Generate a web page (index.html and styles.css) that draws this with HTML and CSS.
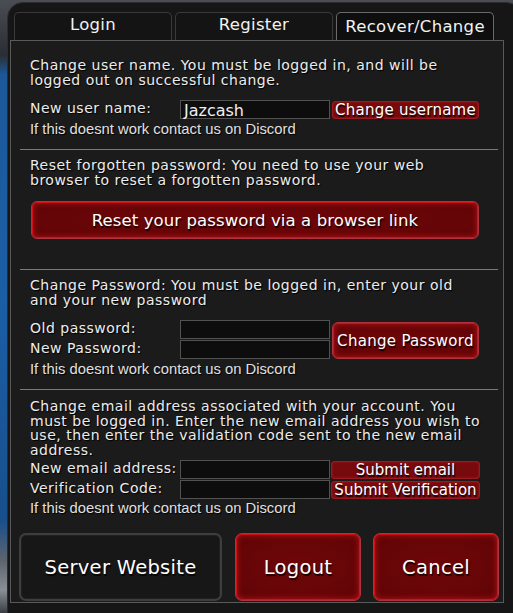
FILE: index.html
```html
<!DOCTYPE html>
<html lang="en">
<head>
<meta charset="utf-8">
<title>Recover/Change</title>
<link rel="stylesheet" href="styles.css">
</head>
<body>
<div class="screen">
  <div class="dialog">
    <div class="tabs">
      <div class="tab">Login</div>
      <div class="tab">Register</div>
      <div class="tab active">Recover/Change</div>
    </div>
    <div class="panel">
      <section class="sec s1">
        <p class="desc">Change user name. You must be logged in, and will be<br>logged out on successful change.</p>
        <div class="form form-a">
          <span class="label">New user name:</span>
          <div class="input">Jazcash</div>
          <button class="btn btn-sm">Change username</button>
        </div>
        <p class="note">If this doesnt work contact us on Discord</p>
      </section>
      <section class="sec s2">
        <p class="desc">Reset forgotten password: You need to use your web<br>browser to reset a forgotten password.</p>
        <button class="btn btn-red btn-reset">Reset your password via a browser link</button>
      </section>
      <section class="sec s3">
        <p class="desc">Change Password: You must be logged in, enter your old<br>and your new password</p>
        <div class="form form-b">
          <span class="label">Old password:</span>
          <div class="input"></div>
          <button class="btn btn-red btn-pw">Change Password</button>
          <span class="label">New Password:</span>
          <div class="input"></div>
        </div>
        <p class="note">If this doesnt work contact us on Discord</p>
      </section>
      <section class="sec s4">
        <p class="desc">Change email address associated with your account. You<br>must be logged in. Enter the new email address you wish to<br>use, then enter the validation code sent to the new email<br>address.</p>
        <div class="form form-c">
          <span class="label">New email address:</span>
          <div class="input"></div>
          <button class="btn btn-sm btn-xs">Submit email</button>
          <span class="label">Verification Code:</span>
          <div class="input"></div>
          <button class="btn btn-sm btn-xs">Submit Verification</button>
        </div>
        <p class="note">If this doesnt work contact us on Discord</p>
      </section>
      <div class="actions">
        <button class="btn btn-big btn-dark">Server Website</button>
        <button class="btn btn-big btn-red">Logout</button>
        <button class="btn btn-big btn-red">Cancel</button>
      </div>
    </div>
  </div>
</div>
</body>
</html>
```
FILE: styles.css
```css
html, body {
  margin: 0;
  padding: 0;
}
body {
  width: 513px;
  height: 613px;
  overflow: hidden;
  background: linear-gradient(to bottom, #4a4e54 0px, #2a2e34 55px, #1c5899 75px, #1b5ea6 300px, #184f8c 520px, #5d636c 560px, #8a8f96 590px, #3b3f45 613px);
  font-family: "DejaVu Sans", sans-serif;
  color: #ececec;
}
.screen {
  margin: 2px 0 0 7px;
  height: 640px;
  width: 520px;
  box-sizing: border-box;
  padding: 9px 0 0 2px;
  background: #161616;
  border: 1px solid #2c2c2c;
  border-radius: 16px 22px 0 0;
}
.dialog {
  width: 494px;
}
.tabs {
  display: flex;
  gap: 3px;
  padding-left: 4px;
  height: 28px;
}
.tab {
  box-sizing: border-box;
  width: 158px;
  height: 28px;
  border: 1px solid #3a3a3a;
  border-bottom: none;
  border-radius: 5px 5px 0 0;
  background: #141414;
  text-align: center;
  font-size: 16.5px;
  letter-spacing: 0.3px;
  line-height: 23px;
  color: #f2f2f2;
}
.tab.active {
  background: #0e0e0e;
  border-color: #6a6a6a;
  padding-top: 2px;
}
.panel {
  border: 1px solid #5a5a5a;
  background: #1b1b1b;
  padding: 0 4px 1px 8px;
}
.sec {
  margin: 0 1px;
  padding: 0 19px 0 10px;
  border-bottom: 1px solid #7a7a7a;
}
.s1 { padding-top: 17px; padding-bottom: 12px; }
.s2 { padding-top: 8px; padding-bottom: 30px; }
.s3 { padding-top: 8px; padding-bottom: 12px; }
.s4 { padding-top: 9px; padding-bottom: 0; border-bottom: none; }
.desc {
  margin: 0;
  font-size: 14px;
  letter-spacing: 0.5px;
  line-height: 14.5px;
  color: #ececec;
  text-shadow: 1px 1px 1px #000;
  white-space: nowrap;
}
.note {
  margin: 2px 0 0;
  font-family: "Liberation Sans", Arial, sans-serif;
  font-size: 14.8px;
  line-height: 16px;
  color: #e0e0e0;
  text-shadow: 1px 1px 1px #000;
  white-space: nowrap;
}
.s4 .note { margin-top: 1px; }
.form {
  display: grid;
  grid-template-columns: 148px 150px 147px;
  column-gap: 2px;
  row-gap: 1px;
  margin-top: 13px;
}
.form-a { grid-template-rows: 19px; }
.form-b { grid-template-rows: 19px 19px; }
.form-c {
  grid-template-rows: 19px 19px;
  grid-template-columns: 149px 150px 149px;
  column-gap: 1px;
  margin-top: 3px;
}
.label {
  font-size: 14px;
  letter-spacing: 0.5px;
  line-height: 17px;
  color: #ececec;
  text-shadow: 1px 1px 1px #000;
  white-space: nowrap;
}
.input {
  box-sizing: border-box;
  height: 19px;
  background: #0d0d0d;
  border: 1px solid #515151;
  padding: 2px 0 0 3px;
  font-size: 16px;
  line-height: 15px;
  color: #f0f0f0;
}
.btn {
  margin: 0;
  padding: 0;
  font-family: "DejaVu Sans", sans-serif;
  color: #ffffff;
  text-align: center;
  text-shadow: 1px 2px 1px rgba(0, 0, 0, 0.85);
  cursor: pointer;
  box-sizing: border-box;
}
.btn-sm {
  align-self: start;
  margin-top: 1px;
  height: 18px;
  border-radius: 3px;
  background: #760a0d;
  border: 1px solid #9b1a22;
  box-shadow: inset 0 0 3px rgba(255, 50, 50, 0.35);
  font-size: 15px;
  letter-spacing: 0.25px;
  line-height: 14px;
}
.btn-xs {
  letter-spacing: 0;
}
.btn-red {
  background: radial-gradient(ellipse at center, #6e0608 0%, #650507 70%, #5a0406 100%);
  border: 1px solid #b0303e;
  box-shadow: inset 0 0 0 1px #d0121a, inset 0 0 6px 1px rgba(255, 30, 30, 0.55);
  border-radius: 6px;
}
.btn-reset {
  display: block;
  width: 448px;
  height: 38px;
  margin: 14px 0 0 1px;
  font-size: 16.5px;
  letter-spacing: 0.1px;
}
.btn-pw {
  grid-column: 3;
  grid-row: 1 / 3;
  margin-top: 2px;
  height: 37px;
  font-size: 15px;
  letter-spacing: 0.3px;
}
.actions {
  display: flex;
  margin-top: 17px;
  height: 68px;
}
.btn-big {
  height: 68px;
  width: 126px;
  font-size: 19.5px;
  letter-spacing: 0.3px;
  border-radius: 7px;
}
.btn-dark {
  width: 203px;
  margin-right: 13px;
  background: #171717;
  border: 2px solid #3e3e3e;
  box-shadow: inset 0 0 0 1px #202020;
}
.actions .btn-red + .btn-red {
  margin-left: 12px;
}
```
